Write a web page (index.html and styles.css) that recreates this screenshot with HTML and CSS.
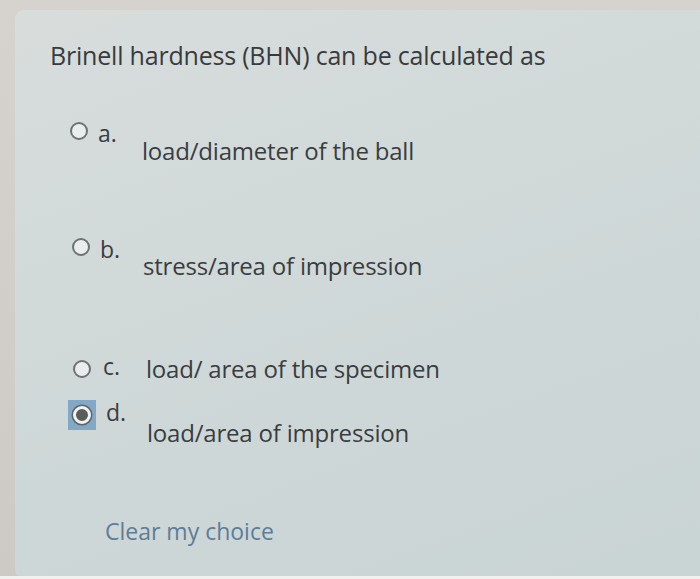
FILE: index.html
```html
<!DOCTYPE html>
<html>
<head>
<meta charset="utf-8">
<link rel="stylesheet" href="styles.css">
</head>
<body>
<div class="screen">
  <div class="card">
    <div class="qtext">Brinell hardness (BHN) can be calculated as</div>
    <div class="answers">
      <div class="opt opt-a">
        <span class="radio"></span>
        <span class="letter">a.</span>
        <span class="label">load/diameter of the ball</span>
      </div>
      <div class="opt opt-b">
        <span class="radio"></span>
        <span class="letter">b.</span>
        <span class="label">stress/area of impression</span>
      </div>
      <div class="opt opt-c">
        <span class="radio"></span>
        <span class="letter">c.</span>
        <span class="label">load/ area of the specimen</span>
      </div>
      <div class="opt opt-d">
        <span class="focus"><span class="radio checked"></span></span>
        <span class="letter">d.</span>
        <span class="label">load/area of impression</span>
      </div>
    </div>
    <div class="clear">Clear my choice</div>
  </div>
</div>
</body>
</html>
```
FILE: styles.css
```css
html, body {
  margin: 0;
  padding: 0;
}
body {
  width: 700px;
  height: 579px;
  overflow: hidden;
  background: linear-gradient(180deg, #d6d3ce 0%, #cdcac5 100%);
  font-family: "Open Sans", "Liberation Sans", sans-serif;
  color: #3a3d3f;
}
.screen {
  padding: 10px 0 0 15px;
  height: 579px;
  box-sizing: border-box;
  border-bottom: 3px solid #f1f2f0;
}
.card {
  height: 100%;
  border-radius: 9px 0 0 6px;
  background: linear-gradient(160deg, #d8dddc 0%, #d1d9d9 40%, #c9d4d4 100%);
  padding: 28px 0 0 35px;
  box-sizing: border-box;
}
.qtext {
  font-size: 25px;
  line-height: 34px;
  letter-spacing: -0.2px;
  color: #383b3d;
}
.answers {
  margin-top: 46px;
}
.opt {
  display: flex;
  align-items: flex-start;
}
.radio {
  width: 14px;
  height: 14px;
  border: 2px solid #6e7273;
  border-radius: 50%;
  background: #e9eded;
  flex: none;
  margin-top: 4px;
}
.radio.checked {
  background: #5a5c5c;
  border: 3px solid #f1f3f3;
  box-shadow: 0 0 0 1.5px #5f6466;
  width: 12px;
  height: 12px;
  margin-top: 0;
}
.focus {
  width: 28px;
  height: 30px;
  background: #82a8c6;
  display: flex;
  align-items: center;
  justify-content: center;
  flex: none;
}
.letter {
  font-size: 23px;
  line-height: 26px;
  margin-top: 2px;
  margin-left: 10px;
  flex: none;
}
.label {
  font-size: 24px;
  line-height: 30px;
  letter-spacing: -0.2px;
}
.opt-a { margin-left: 20px; }
.opt-a .letter { width: 44px; }
.opt-a .label { margin-top: 18px; }

.opt-b { margin-left: 22px; margin-top: 68px; }
.opt-b .letter { width: 43px; }
.opt-b .label { margin-top: 17px; }

.opt-c { margin-left: 23px; margin-top: 75px; }
.opt-c .letter { margin-left: 12px; width: 43px; margin-top: -3px; }
.opt-c .label { margin-top: -2px; }

.opt-d { margin-left: 18px; margin-top: 16px; }
.opt-d .letter { margin-left: 10px; width: 41px; margin-top: -1px; }
.opt-d .label { margin-top: 18px; }

.clear {
  margin-top: 68px;
  margin-left: 55px;
  font-size: 23px;
  line-height: 30px;
  color: #5e7d96;
}
```
